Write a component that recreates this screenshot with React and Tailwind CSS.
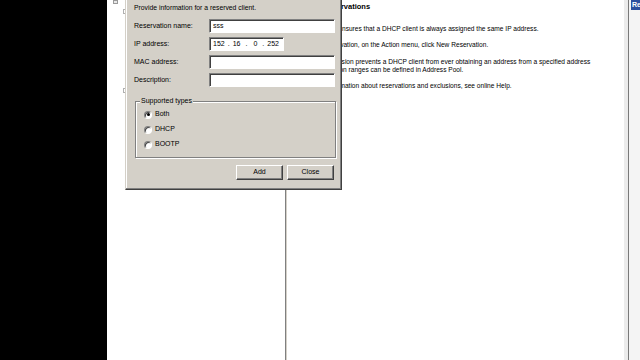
import React from "react";

const font = { fontFamily: '"Liberation Sans", Arial, sans-serif' };

const Field = ({ label, children }) => (
    <div className="flex items-center h-[14px]">
        <span className="w-[75px]">{label}</span>
        {children}
    </div>
);

const Input = ({ value = "", w = "w-[126px]" }) => (
    <div className={`${w} h-[14px] bg-white border border-t-[#808080] border-l-[#808080] border-b-white border-r-white shadow-[inset_1px_1px_0_#404040] flex items-center pl-[3px]`}>
        {value}
    </div>
);

const Radio = ({ label, checked }) => (
    <div className="flex items-center h-[9px] gap-[3px]">
        <span className="w-[8px] h-[8px] rounded-full bg-white border border-t-[#808080] border-l-[#808080] border-b-white border-r-white shadow-[inset_1px_1px_0_#404040] flex items-center justify-center">
            {checked && <span className="w-[3px] h-[3px] rounded-full bg-black"></span>}
        </span>
        <span>{label}</span>
    </div>
);

const Button = ({ children }) => (
    <div className="w-[47px] h-[15px] flex items-center justify-center border border-t-white border-l-white border-b-[#404040] border-r-[#404040] shadow-[inset_-1px_-1px_0_#808080]">
        {children}
    </div>
);

const Dialog = () => (
    <div className="absolute left-[18px] top-[-3px] w-[217px] h-[193px] bg-[#d4d0c8] border border-t-[#d4d0c8] border-l-[#d4d0c8] border-b-[#404040] border-r-[#404040] shadow-[inset_-1px_-1px_0_#808080,inset_1px_1px_0_#ffffff] text-[7px] text-black pl-[8px] pr-[6px]">
        <div className="mt-[6px] h-[8px] leading-[8px] text-[6.8px]">Provide information for a reserved client.</div>
        <div className="mt-[7px] flex flex-col gap-[4px]">
            <Field label="Reservation name:"><Input value="sss" /></Field>
            <Field label="IP address:">
                <div className="w-[75px] h-[14px] bg-white border border-t-[#808080] border-l-[#808080] border-b-white border-r-white shadow-[inset_1px_1px_0_#404040] flex items-center pl-[3px] gap-[3px]">
                    <span>152</span><span>.</span><span>16</span><span className="ml-[2px]">.</span><span className="ml-[3px]">0</span><span className="ml-[2px]">.</span><span>252</span>
                </div>
            </Field>
            <Field label="MAC address:"><Input /></Field>
            <Field label="Description:"><Input /></Field>
        </div>
        <div className="relative mt-[14px] ml-[1px] w-[201px] h-[57px] border border-[#808080] shadow-[1px_1px_0_#ffffff,inset_1px_1px_0_#ffffff]">
            <span className="absolute left-[4px] top-[-5px] bg-[#d4d0c8] px-[1px] leading-[8px]">Supported types</span>
            <div className="flex flex-col gap-[6px] pl-[8px] pt-[8px]">
                <Radio label="Both" checked />
                <Radio label="DHCP" />
                <Radio label="BOOTP" />
            </div>
        </div>
        <div className="mt-[7px] flex justify-end gap-[4px] pr-[1px]">
            <Button>Add</Button>
            <Button>Close</Button>
        </div>
    </div>
);

export default function App() {
    return (
        <div className="w-[640px] h-[360px] flex bg-black overflow-hidden" style={font}>
            <div className="w-[107px] shrink-0 bg-black"></div>
            <div className="relative flex flex-1 bg-white">
                {/* tree pane */}
                <div className="w-[178px] shrink-0 relative">
                    <div className="ml-[6px] w-[5px] h-[4px] border border-[#9a9a9a] bg-[#e8e8e8]"></div>
                    <div className="ml-[16px] mt-[5px] w-[2px] h-[5px] border-l border-t border-b border-[#b0b0b0]"></div>
                    <div className="ml-[16px] mt-[74px] w-[2px] h-[5px] border-l border-t border-b border-[#b0b0b0]"></div>
                </div>
                <div className="w-[2px] shrink-0 bg-[#808080] border-r border-[#d4d0c8]"></div>
                {/* details pane */}
                <div className="flex-1 text-[6.6px] text-black leading-[8px] pl-[11px]">
                    <div className="mt-[3px] font-bold text-[7.5px] pl-[25px]">Reservations</div>
                    <div className="mt-[14px]">A reservation ensures that a DHCP client is always assigned the same IP address.</div>
                    <div className="mt-[8px]">To add a reservation, on the Action menu, click New Reservation.</div>
                    <div className="mt-[9px] -indent-[7px]">An address exclusion prevents a DHCP client from ever obtaining an address from a specified address<br />range. Exclusion ranges can be defined in Address Pool.</div>
                    <div className="mt-[8px]">For more information about reservations and exclusions, see online Help.</div>
                </div>
                {/* action pane edge */}
                <div className="w-[4px] shrink-0 bg-[#ececec]"></div>
                <div className="w-[12px] shrink-0 border-l border-[#7a7a7a] bg-[#f4f4f4]">
                    <div className="ml-[2px] h-[10px] bg-[#2d4f9e] text-white text-[7px] font-bold leading-[10px] pl-[1px] overflow-hidden">Re</div>
                </div>
                <Dialog />
            </div>
        </div>
    );
}
